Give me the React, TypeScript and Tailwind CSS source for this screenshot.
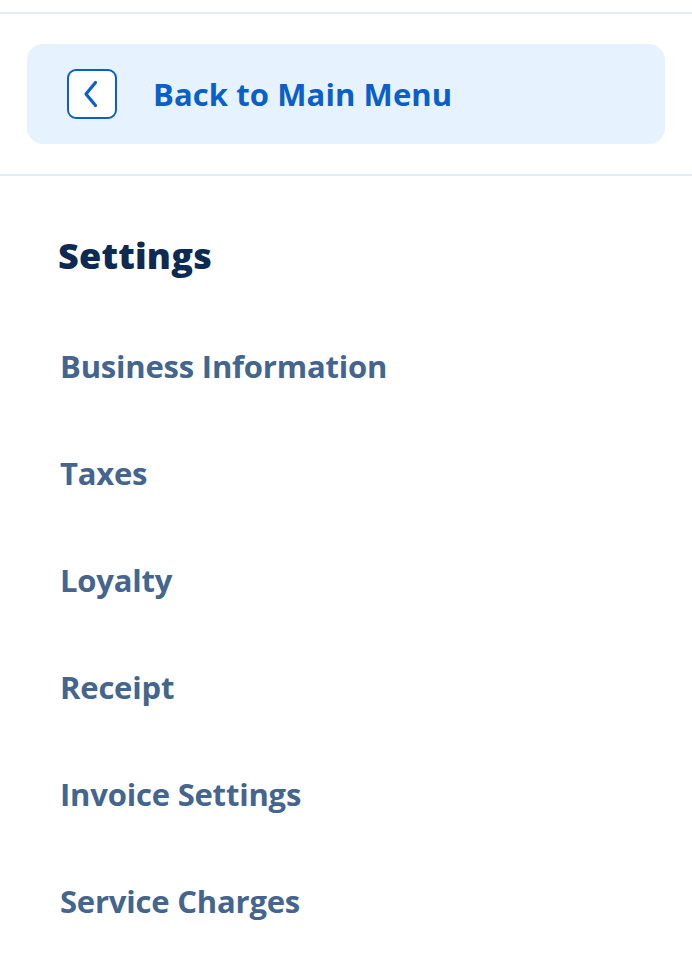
import React from 'react';

const items = ['Business Information', 'Taxes', 'Loyalty', 'Receipt', 'Invoice Settings', 'Service Charges'];

export default function App() {
  return (
    <div className="w-[692px] h-[966px] bg-white overflow-hidden font-['Open_Sans',sans-serif]">
      <div className="pt-3">
        <div className="h-[2px] bg-[#e1ecf6]"></div>
        <div className="px-[27px] pt-[30px] pb-[30px]">
          <button className="w-full h-[100px] rounded-[16px] bg-[#e6f2fe] flex items-center pl-10 gap-[36px]">
            <span className="w-[50px] h-[50px] shrink-0 rounded-[9px] border-2 border-[#0b5fc7] bg-white flex items-center justify-center">
              <svg width="22" height="28" viewBox="0 0 22 28" fill="none" className="shrink-0 -ml-[2px]">
                <path d="M15.5 2.5 L6 14 L15.5 25.5" stroke="#0b5fc7" strokeWidth="3.2" strokeLinecap="round" strokeLinejoin="round" />
              </svg>
            </span>
            <span className="text-[31px] font-bold text-[#0a5fc8] tracking-[0.1px]">Back to Main Menu</span>
          </button>
        </div>
        <div className="h-[2px] bg-[#e1ecf6]"></div>
      </div>
      <div className="pl-[58px] pt-[56px]">
        <h2 className="text-[36px] leading-[48px] font-extrabold text-[#0c2a52] tracking-[0.2px]">Settings</h2>
        <ul className="mt-[66px] pl-[2px] flex flex-col gap-[67px]">
          {items.map((item) => (
            <li key={item} className="text-[31px] leading-[40px] font-bold text-[#44658e] tracking-[-0.2px]">{item}</li>
          ))}
        </ul>
      </div>
    </div>
  );
}
